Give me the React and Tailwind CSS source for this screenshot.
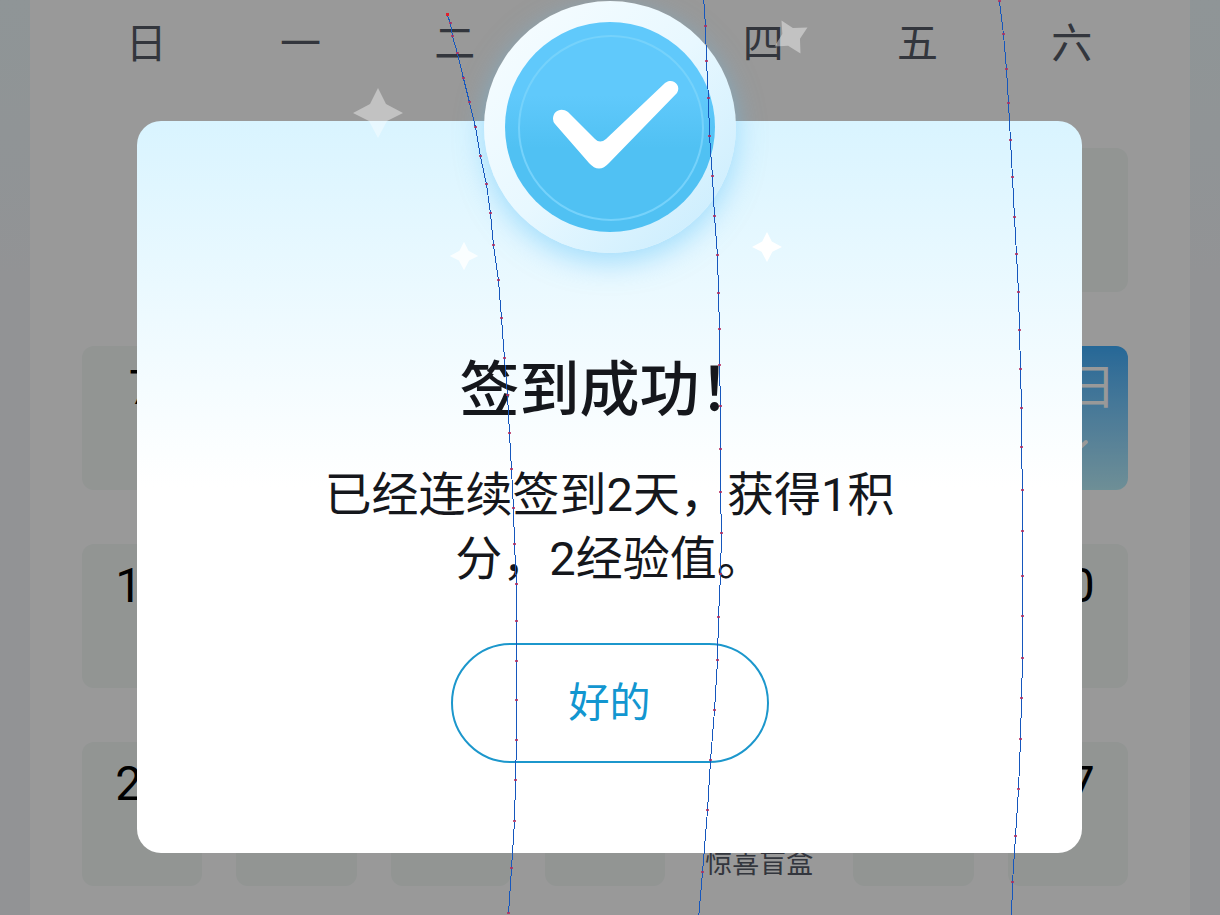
import { useState } from 'react';
import clsx from 'clsx';

const WEEKDAYS = ['日', '一', '二', '三', '四', '五', '六'];

// one row per week, '' = day tile without a number, null = no tile
const WEEKS = [
    [null, '', '', '', '', '', ''],
    ['7', '', '', '', '', '', '今日'],
    ['14', '', '', '', '', '', '20'],
    ['21', '', '', '', '惊喜盲盒', '', '27'],
];

const TRACES = [
    [[447, 15], [450, 23], [452, 36], [457, 53], [463, 78], [469, 102], [475, 127], [480, 156], [486, 184], [490, 213], [493, 245], [498, 280], [501, 318], [504, 358], [507, 395], [509, 433], [511, 469], [513, 508], [514, 544], [516, 584], [516, 621], [516, 661], [516, 700], [516, 740], [515, 780], [514, 821], [511, 868], [508, 913]],
    [[703, -4], [705, 26], [706, 61], [708, 98], [709, 136], [712, 176], [714, 216], [717, 255], [718, 293], [719, 329], [719, 365], [720, 406], [720, 449], [720, 492], [721, 533], [720, 574], [718, 617], [717, 660], [714, 710], [710, 760], [707, 810], [702, 872], [698, 918]],
    [[999, 1], [1003, 34], [1006, 69], [1008, 103], [1010, 140], [1012, 177], [1014, 217], [1016, 254], [1018, 292], [1019, 330], [1020, 369], [1021, 408], [1021, 447], [1022, 490], [1022, 531], [1022, 576], [1022, 616], [1022, 658], [1021, 698], [1020, 739], [1018, 789], [1015, 836], [1012, 882], [1011, 918]],
];

function DayCell({ label }) {
    if (label === null) return <div />;

    if (label === '惊喜盲盒') {
        return (
            <div className="h-36 flex flex-col items-center justify-end pb-2 whitespace-nowrap text-[27px] leading-7 text-[#555a66]">
                {label}
            </div>
        );
    }

    const isToday = label === '今日';
    return (
        <div
            className={clsx(
                'h-36 rounded-xl flex flex-col items-center gap-5 pt-3.5 whitespace-nowrap text-[48px] leading-[56px]',
                isToday ? 'bg-linear-to-b from-[#3fadfc] to-[#b8eefb] text-white' : 'bg-[#f3f8f6]',
            )}
        >
            {label}
            {isToday && (
                <svg viewBox="0 0 44 32" className="w-11 h-8" fill="none" stroke="#fff" strokeWidth="4" strokeLinecap="round" strokeLinejoin="round" aria-hidden="true">
                    <path d="M6 16 17 27 40 6" />
                </svg>
            )}
        </div>
    );
}

function Calendar() {
    return (
        <div className="mx-[30px] min-h-screen bg-white flex flex-col gap-[76px] pt-4">
            <div className="grid grid-cols-7 gap-x-[34px] pl-14 pr-[58px] text-center text-[41px] leading-[56px] text-[#555a66]">
                {WEEKDAYS.map((d) => <span key={d}>{d}</span>)}
            </div>
            <div className="grid grid-cols-7 gap-x-[34px] gap-y-[54px] pl-[52px] pr-[62px] text-black">
                {WEEKS.flat().map((label, i) => <DayCell key={i} label={label} />)}
            </div>
        </div>
    );
}

function Badge() {
    return (
        <div className="absolute inset-x-0 -top-[120px] flex justify-center">
            <svg viewBox="0 0 252 252" className="size-[252px] rounded-full bg-linear-to-br from-[#f8fdff] via-[#e8f8ff] to-[#c6ebfd] shadow-[0_10px_28px_rgba(100,198,250,0.5)]" aria-hidden="true">
                <defs>
                    <linearGradient id="badgeFill" x1="0" y1="0" x2="0" y2="1">
                        <stop offset="0" stopColor="#60c9fb" />
                        <stop offset="0.35" stopColor="#60c9fb" />
                        <stop offset="0.6" stopColor="#50c1f3" />
                        <stop offset="1" stopColor="#50c1f3" />
                    </linearGradient>
                </defs>
                <circle cx="126" cy="126" r="105" fill="url(#badgeFill)" />
                <circle cx="127" cy="127" r="92" fill="none" stroke="#75d2fb" strokeWidth="2" />
                <path
                    fill="#fff"
                    d="M69 118C69 110 77 106 84 111L111 138Q116 143 122 138L181 82C188 76 198 84 193 92L125 162Q115 173 105 162L71 123Q69 121 69 118Z"
                />
            </svg>
        </div>
    );
}

// sparkles around the badge, origin is the middle of the card's top edge
function Stars() {
    const star = 'M0-25 8-9 25 0 9 8 0 25-9 8-25 0-8-9Z';
    return (
        <div className="absolute inset-x-0 top-0 flex justify-center pointer-events-none">
            <svg viewBox="0 0 2 2" className="size-0.5 overflow-visible" fill="#fff" aria-hidden="true">
                <path d={star} opacity="0.4" transform="translate(-231 -8)" />
                <path d={star} opacity="0.4" transform="translate(182 -84) rotate(-30) scale(0.76)" />
                <path d={star} opacity="0.8" transform="translate(-145 135) scale(0.57)" />
                <path d={star} transform="translate(158 126) scale(0.6)" />
            </svg>
        </div>
    );
}

function CheckInDialog({ onClose }) {
    return (
        <div role="dialog" aria-modal="true" aria-labelledby="checkin-title" className="relative w-full rounded-3xl bg-white bg-linear-to-b from-[#d9f4ff] to-white to-50% pt-[234px] pb-[90px] flex flex-col items-center gap-[52px] text-[#15171c]">
            <Badge />
            <Stars />
            <div className="flex flex-col items-center gap-9 text-center">
                <h2 id="checkin-title" className="text-[60px] leading-[72px] font-medium">签到成功！</h2>
                <p className="max-w-[600px] text-[47px] leading-16">已经连续签到2天，获得1积分，2经验值。</p>
            </div>
            <button
                type="button"
                onClick={onClose}
                className="w-[318px] h-[120px] rounded-full border-2 border-[#1c97cc] text-[41px] leading-[56px] text-[#1296d0] cursor-pointer"
            >
                好的
            </button>
        </div>
    );
}

function TouchTraces() {
    return (
        <svg className="absolute inset-0 size-full pointer-events-none" shapeRendering="crispEdges" aria-hidden="true">
            {TRACES.map((points, i) => (
                <g key={i}>
                    <polyline transform="translate(0.5 0.5)" points={points.map((p) => p.join(',')).join(' ')} fill="none" stroke="#1657bd" strokeWidth="1" />
                    {points.map(([x, y]) => (
                        <rect key={y} x={x - 1} y={y - 1} width="3" height="2" fill="#b52a5c" fillOpacity="0.8" />
                    ))}
                </g>
            ))}
            <rect x="446" y="13" width="3" height="3" fill="#e0202c" />
        </svg>
    );
}

export default function App() {
    const [open, setOpen] = useState(true);

    return (
        <div className="relative h-screen overflow-hidden bg-linear-to-b from-[#eef8fc] to-[#f3f6f9] to-30% font-[Roboto,'Noto_Sans_CJK_SC',sans-serif]">
            <Calendar />
            {open && (
                <div className="absolute inset-0 bg-black/40 flex items-start pl-[137px] pr-[138px] pt-[121px]">
                    <CheckInDialog onClose={() => setOpen(false)} />
                </div>
            )}
            <TouchTraces />
        </div>
    );
}
